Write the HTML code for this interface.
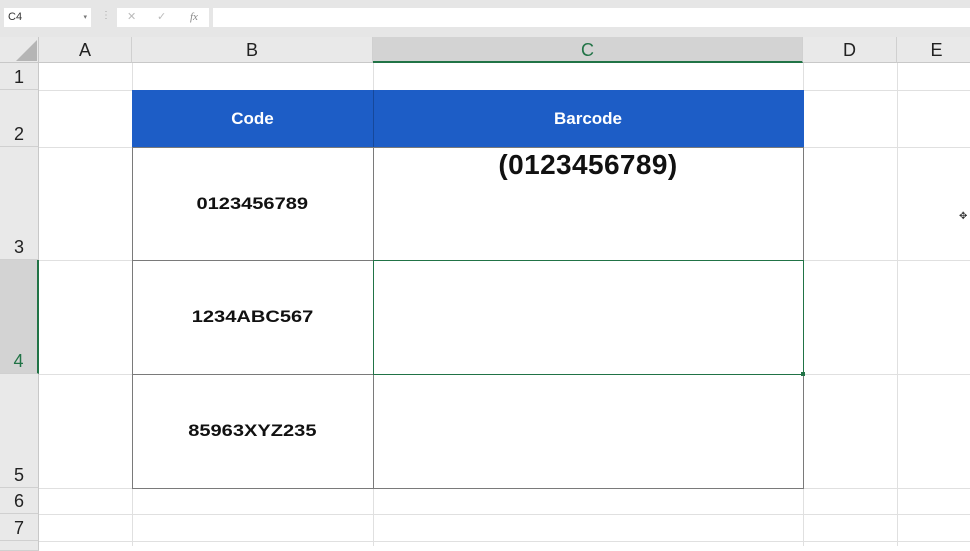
<!DOCTYPE html>
<html><head><meta charset="utf-8"><style>
*{margin:0;padding:0;box-sizing:border-box}
body{width:970px;height:546px;overflow:hidden;background:#fff;font-family:"Liberation Sans",sans-serif;position:relative}
.a{position:absolute}
.ch{position:absolute;top:37px;height:26px;background:#e9e9e9;border-right:1px solid #d0d0d0;border-bottom:1px solid #c8c8c8;text-align:center;font-size:18px;line-height:27px;color:#222}
.rh{position:absolute;left:0;width:39px;background:#e9e9e9;border-bottom:1px solid #d0d0d0;border-right:1px solid #c8c8c8;font-size:18px;color:#222;text-align:center}
.rh span{position:absolute;bottom:2px;left:0;right:0;text-align:center;line-height:20px}
.cell{position:absolute;display:flex;align-items:center;justify-content:center;font-weight:bold;font-size:17px;color:#111}
.code span{display:inline-block;transform:scaleX(1.18)}
</style></head><body>
<div class="a" style="left:0;top:0;width:970px;height:37px;background:#e6e6e6"></div>
<div class="a" style="left:4px;top:8px;width:87px;height:19px;background:#fff;font-size:11px;line-height:19px;padding-left:4px;color:#333">C4<span style="position:absolute;right:4px;font-size:7px;color:#777">▾</span></div>
<div class="a" style="left:101px;top:10px;color:#aaa;font-size:10px">⋮</div>
<div class="a" style="left:117px;top:8px;width:92px;height:19px;background:#fff;color:#bbb;font-size:11px;line-height:19px"><span style="position:absolute;left:10px">✕</span><span style="position:absolute;left:40px">✓</span><span style="position:absolute;left:73px;font-style:italic;font-family:'Liberation Serif',serif;color:#888">fx</span></div>
<div class="a" style="left:213px;top:8px;width:757px;height:19px;background:#fff"></div>
<div class="a" style="left:0;top:37px;width:39px;height:26px;background:#e9e9e9;border-right:1px solid #c8c8c8;border-bottom:1px solid #c8c8c8"></div>
<svg class="a" style="left:12px;top:40px" width="26" height="22"><polygon points="25,0 25,21 4,21" fill="#b5b5b5"/></svg>
<div class="ch" style="left:39px;width:93px">A</div>
<div class="ch" style="left:132px;width:241px">B</div>
<div class="ch" style="left:373px;width:430px;background:#d3d3d3;color:#217346;border-bottom:2px solid #217346">C</div>
<div class="ch" style="left:803px;width:94px">D</div>
<div class="ch" style="left:897px;width:80px">E</div>
<div class="a" style="left:39px;top:90px;width:931px;height:1px;background:#e0e0e0"></div>
<div class="a" style="left:39px;top:147px;width:931px;height:1px;background:#e0e0e0"></div>
<div class="a" style="left:39px;top:260px;width:931px;height:1px;background:#e0e0e0"></div>
<div class="a" style="left:39px;top:374px;width:931px;height:1px;background:#e0e0e0"></div>
<div class="a" style="left:39px;top:488px;width:931px;height:1px;background:#e0e0e0"></div>
<div class="a" style="left:39px;top:514px;width:931px;height:1px;background:#e0e0e0"></div>
<div class="a" style="left:39px;top:541px;width:931px;height:1px;background:#e0e0e0"></div>
<div class="a" style="left:132px;top:63px;width:1px;height:483px;background:#e0e0e0"></div>
<div class="a" style="left:373px;top:63px;width:1px;height:483px;background:#e0e0e0"></div>
<div class="a" style="left:803px;top:63px;width:1px;height:483px;background:#e0e0e0"></div>
<div class="a" style="left:897px;top:63px;width:1px;height:483px;background:#e0e0e0"></div>
<div class="rh" style="top:63px;height:27px"><span>1</span></div>
<div class="rh" style="top:90px;height:57px"><span>2</span></div>
<div class="rh" style="top:147px;height:113px"><span>3</span></div>
<div class="rh" style="top:260px;height:114px;background:#d3d3d3;color:#217346;border-right:2px solid #217346"><span>4</span></div>
<div class="rh" style="top:374px;height:114px"><span>5</span></div>
<div class="rh" style="top:488px;height:26px"><span>6</span></div>
<div class="rh" style="top:514px;height:27px"><span>7</span></div>
<div class="rh" style="top:541px;height:10px"></div>
<div class="a" style="left:132px;top:90px;width:672px;height:57px;background:#1d5dc6"></div>
<div class="cell" style="left:132px;top:90px;width:241px;height:57px;color:#fff">Code</div>
<div class="cell" style="left:373px;top:90px;width:430px;height:57px;color:#fff">Barcode</div>
<div class="a" style="left:373px;top:90px;width:1px;height:57px;background:#16489a"></div>
<div class="a" style="left:132px;top:147px;width:672px;height:342px;border:1px solid #7a7a7a"></div>
<div class="a" style="left:373px;top:147px;width:1px;height:341px;background:#7a7a7a"></div>
<div class="a" style="left:132px;top:260px;width:671px;height:1px;background:#7a7a7a"></div>
<div class="a" style="left:132px;top:374px;width:671px;height:1px;background:#7a7a7a"></div>
<div class="cell code" style="left:132px;top:147px;width:241px;height:113px"><span>0123456789</span></div>
<div class="cell code" style="left:132px;top:260px;width:241px;height:114px"><span>1234ABC567</span></div>
<div class="cell code" style="left:132px;top:374px;width:241px;height:114px"><span>85963XYZ235</span></div>
<div class="a" style="left:373px;top:149px;width:430px;text-align:center;font-size:28px;font-weight:bold;color:#111;letter-spacing:0.4px">(0123456789)</div>
<div class="a" style="left:373px;top:260px;width:431px;height:115px;border:1px solid #217346"></div>
<div class="a" style="left:801px;top:372px;width:4px;height:4px;background:#217346"></div>
<div class="a" style="left:959px;top:211px;font-size:10px;color:#333">✥</div>
</body></html>
